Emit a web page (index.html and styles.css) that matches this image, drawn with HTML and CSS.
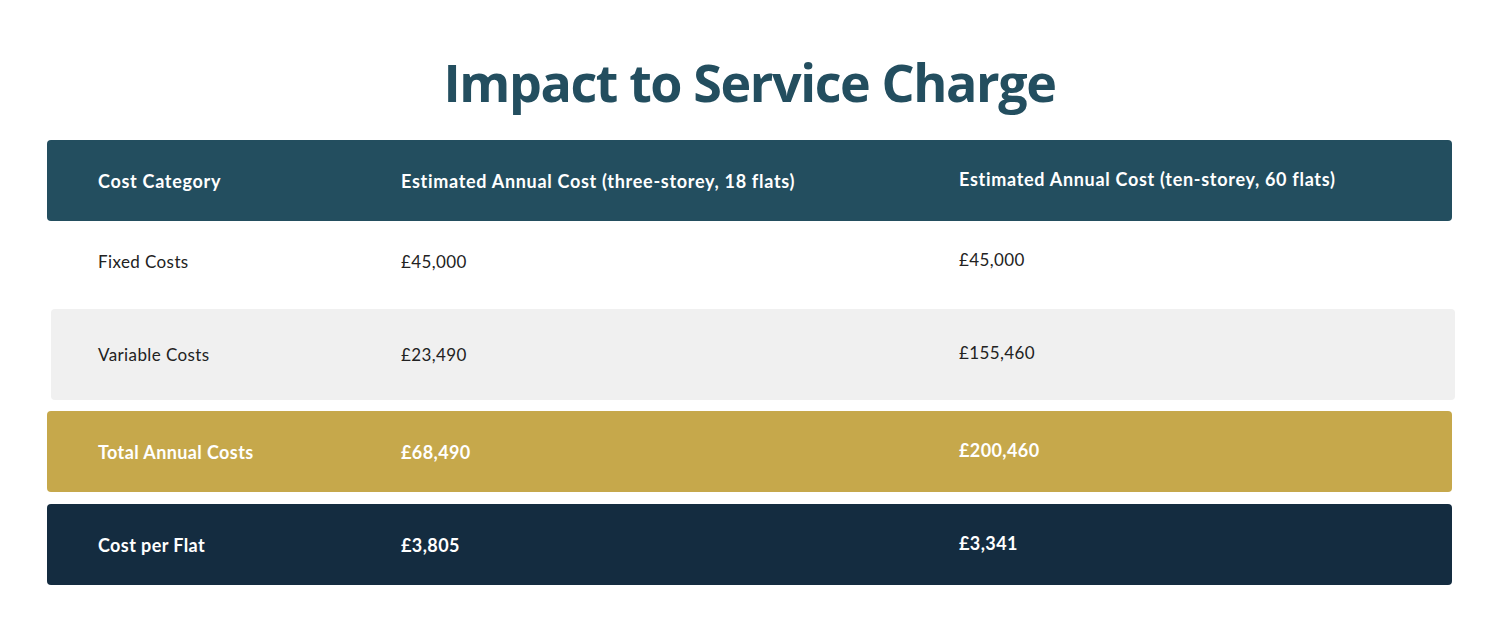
FILE: index.html
```html
<!DOCTYPE html>
<html lang="en">
<head>
<meta charset="utf-8">
<title>Impact to Service Charge</title>
<link rel="stylesheet" href="styles.css">
</head>
<body>
<main class="page">
  <h1 class="title">Impact to Service Charge</h1>
  <div class="table">
    <div class="row row-head">
      <div class="cell">Cost Category</div>
      <div class="cell">Estimated Annual Cost (three-storey, 18 flats)</div>
      <div class="cell cell-last">Estimated Annual Cost (ten-storey, 60 flats)</div>
    </div>
    <div class="row row-plain">
      <div class="cell">Fixed Costs</div>
      <div class="cell">£45,000</div>
      <div class="cell cell-last">£45,000</div>
    </div>
    <div class="row row-alt">
      <div class="cell">Variable Costs</div>
      <div class="cell">£23,490</div>
      <div class="cell cell-last">£155,460</div>
    </div>
    <div class="row row-total">
      <div class="cell">Total Annual Costs</div>
      <div class="cell">£68,490</div>
      <div class="cell cell-last">£200,460</div>
    </div>
    <div class="row row-flat">
      <div class="cell">Cost per Flat</div>
      <div class="cell">£3,805</div>
      <div class="cell cell-last">£3,341</div>
    </div>
  </div>
</main>
</body>
</html>
```

FILE: styles.css
```css
html, body {
  margin: 0;
  padding: 0;
  background: #ffffff;
}

.page {
  padding: 46px 48px 0 47px;
  font-family: "Lato", "Noto Sans", sans-serif;
}

.title {
  margin: 0 0 22px;
  text-align: center;
  font-family: "Open Sans", "Noto Sans", sans-serif;
  font-weight: 700;
  font-size: 52px;
  line-height: 72px;
  letter-spacing: -1.4px;
  color: #234e5f;
}

.table {
  display: flex;
  flex-direction: column;
}

.row {
  display: grid;
  grid-template-columns: 303px 558px 1fr;
  align-items: center;
  height: 81px;
  border-radius: 4px;
  font-size: 17px;
  letter-spacing: 0.4px;
}

.cell {
  padding-left: 51px;
}

.cell-last {
  padding-bottom: 4px;
}

.row-head {
  background: #234e5f;
  color: #ffffff;
  font-weight: 700;
  font-size: 18px;
  letter-spacing: 0.7px;
}

.row-plain {
  background: #ffffff;
  color: #222222;
  margin-bottom: 7px;
}

.row-alt {
  background: #f0f0f0;
  color: #222222;
  height: 91px;
  margin: 0 -3px 11px 4px;
}

.row-alt .cell {
  padding-left: 47px;
}

.row-total {
  background: #c6a84b;
  color: #ffffff;
  font-weight: 700;
  font-size: 18px;
  margin-bottom: 12px;
}

.row-flat {
  background: #142c40;
  color: #ffffff;
  font-weight: 700;
  font-size: 18px;
}
```
